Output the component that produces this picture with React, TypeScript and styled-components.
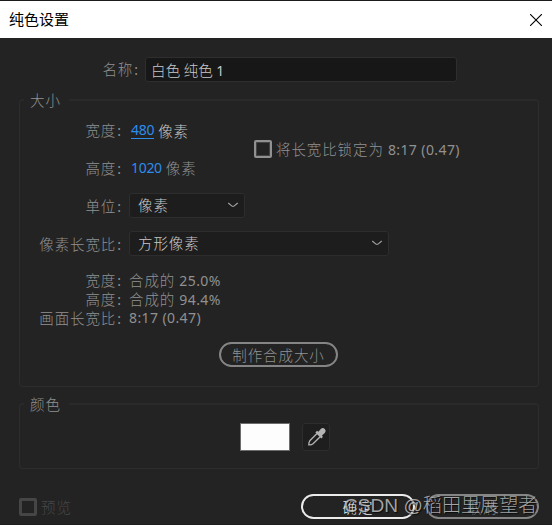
import React from "react";
import styled, { createGlobalStyle } from "styled-components";

const Global = createGlobalStyle`
  * { box-sizing: border-box; }
  body { margin: 0; background: #232323; overflow: hidden; }
`;

const cjk = `"Noto Sans CJK SC", sans-serif`;

const Dialog = styled.div`
  position: relative;
  width: 552px;
  height: 525px;
  background: #232323;
  border-top: 1px solid #1b1b1b;
  border-bottom: 1px solid #1d1d1d;
  color: #919191;
  font: 300 14.5px/19px ${cjk};
  letter-spacing: 0.9px;
  white-space: nowrap;
`;

const TitleBar = styled.header`
  display: flex;
  justify-content: space-between;
  align-items: center;
  height: 37px;
  padding: 0 10px 2px 9px;
  background: #fff;
  color: #000;
  font: 400 15px/20px ${cjk};
  letter-spacing: 0;
`;

const CloseIcon = styled.svg`
  margin-top: 2px;
`;

const NameRow = styled.div`
  display: flex;
  align-items: center;
  height: 25px;
  margin-top: 19px;
`;

const NameLabel = styled.label`
  width: 138px;
  margin-right: 7px;
  padding-bottom: 1px;
  text-align: right;
`;

const NameField = styled.div`
  width: 312px;
  height: 25px;
  padding: 2px 5px;
  border: 1px solid #2e2e2e;
  border-radius: 3px;
  background: #171717;
  color: #c8c8c8;
  letter-spacing: 0.15px;
  line-height: 19px;
`;

const Group = styled.section<{ $height: number; $gap: number }>`
  width: 520px;
  height: ${(p) => p.$height}px;
  margin: ${(p) => p.$gap}px 0 0 19px;
  border: 1px solid #2d2d2d;
  border-top: 2px solid #2a2a2a;
  border-radius: 4px;
`;

const Legend = styled.h2`
  width: 45px;
  height: 19px;
  margin: -11px 0 0 4px;
  padding-left: 6px;
  background: #232323;
  font: inherit;
`;

const Dimensions = styled.div`
  display: flex;
  align-items: center;
  height: 75px;
  margin-top: 2px;
`;

const DimensionFields = styled.div`
  width: 234px;
`;

const Row = styled.div<{ $height: number; $top?: number }>`
  display: flex;
  align-items: center;
  height: ${(p) => p.$height}px;
  margin-top: ${(p) => p.$top ?? 0}px;
`;

const Label = styled.span`
  width: 101px;
  margin-right: 8px;
  text-align: right;
`;

const Latin = styled.span`
  font-family: "Noto Sans", sans-serif;
  font-weight: 400;
  font-size: 14px;
  letter-spacing: 0.4px;
`;

const Colon = styled(Latin)`
  margin-left: 1px;
  letter-spacing: 0;
`;

const HotValue = styled(Latin)<{ $active?: boolean }>`
  height: 18px;
  line-height: 17px;
  margin: 0 4px 0 2px;
  letter-spacing: -0.3px;
  color: #2d8ceb;
  border-bottom: 1px solid ${(p) => (p.$active ? "#2d8ceb" : "transparent")};
`;

const Unit = styled.span<{ $active?: boolean }>`
  color: ${(p) => (p.$active ? "#c8c8c8" : "#919191")};
`;

const Check = styled.label<{ $disabled?: boolean }>`
  display: flex;
  align-items: center;
  gap: 4px;
  color: ${(p) => (p.$disabled ? "#464646" : "#919191")};
`;

const Box = styled.span`
  width: 18px;
  height: 18px;
  border: 2px solid currentColor;
  border-radius: 2px;
  box-shadow: inset 0 0 0 1px rgba(145, 145, 145, 0.3);
`;

const Select = styled.div<{ $width: number }>`
  display: flex;
  align-items: center;
  justify-content: space-between;
  width: ${(p) => p.$width}px;
  height: 25px;
  padding: 0 5px 2px 8px;
  border: 1px solid #2d2d2d;
  border-radius: 3px;
  background: #1d1d1d;
  color: #c8c8c8;
`;

const Summary = styled.div`
  margin-top: 14px;
`;

const Pill = styled.button<{ $width: number; $primary?: boolean }>`
  display: flex;
  align-items: center;
  justify-content: center;
  width: ${(p) => p.$width}px;
  height: 25px;
  padding: 0;
  border: 2px solid ${(p) => (p.$primary ? "#ebebeb" : "#858585")};
  border-radius: 13px;
  background: transparent;
  color: ${(p) => (p.$primary ? "#f0f0f0" : "#919191")};
  font: inherit;
  letter-spacing: 0.9px;
`;

const MakeCompSize = styled(Pill)`
  margin: 15px 0 0 199px;
`;

const ColorRow = styled.div`
  display: flex;
  gap: 12px;
  margin: 10px 0 0 220px;
`;

const Swatch = styled.div`
  width: 50px;
  height: 28px;
  border: 1px solid #6c6c6c;
  background: #fdfdfd;
`;

const Dropper = styled.div`
  display: grid;
  place-items: center;
  width: 28px;
  height: 28px;
  padding-left: 2px;
  border: 1px solid #2d2d2d;
  border-radius: 3px;
  background: #1e1e1e;
`;

const Footer = styled.footer`
  display: flex;
  align-items: center;
  height: 25px;
  margin: 25px 13px 0 19px;
`;

const Actions = styled.div`
  display: flex;
  gap: 11px;
  margin-left: auto;
`;

const Watermark = styled.div`
  position: absolute;
  left: 344px;
  top: 491px;
  color: rgba(190, 190, 190, 0.85);
  font: 300 19.1px/28px "Liberation Sans", ${cjk};
  letter-spacing: 0;
  text-shadow: 1px 1px 1px rgba(0, 0, 0, 0.7);
`;

const Chevron = () => (
  <svg width="12" height="8" viewBox="0 0 12 8" fill="none" stroke="#a8a8a8" strokeWidth="1.1">
    <path d="M1.3 2 L5.2 5.3 H6.8 L10.7 2" />
  </svg>
);

export default function App() {
  return (
    <>
      <Global />
      <Dialog>
        <TitleBar>
          <span>纯色设置</span>
          <CloseIcon width="12" height="12" viewBox="0 0 12 12" stroke="#000" strokeWidth="1.1">
            <path d="M0 0 L12 12 M12 0 L0 12" />
          </CloseIcon>
        </TitleBar>

        <NameRow>
          <NameLabel>名称<Colon>:</Colon></NameLabel>
          <NameField>白色 纯色 <Latin>1</Latin></NameField>
        </NameRow>

        <Group $height={288} $gap={17}>
          <Legend>大小</Legend>
          <Dimensions>
            <DimensionFields>
              <Row $height={38}>
                <Label>宽度<Colon>:</Colon></Label>
                <HotValue $active>480</HotValue>
                <Unit $active>像素</Unit>
              </Row>
              <Row $height={37}>
                <Label>高度<Colon>:</Colon></Label>
                <HotValue>1020</HotValue>
                <Unit>像素</Unit>
              </Row>
            </DimensionFields>
            <Check>
              <Box />
              <span>将长宽比锁定为 <Latin>8:17 (0.47)</Latin></span>
            </Check>
          </Dimensions>
          <Row $height={25} $top={7}>
            <Label>单位<Colon>:</Colon></Label>
            <Select $width={116}>像素<Chevron /></Select>
          </Row>
          <Row $height={25} $top={13}>
            <Label>像素长宽比<Colon>:</Colon></Label>
            <Select $width={260}>方形像素<Chevron /></Select>
          </Row>
          <Summary>
            <Row $height={19}>
              <Label>宽度<Colon>:</Colon></Label>
              <span>合成的 <Latin>25.0%</Latin></span>
            </Row>
            <Row $height={19}>
              <Label>高度<Colon>:</Colon></Label>
              <span>合成的 <Latin>94.4%</Latin></span>
            </Row>
            <Row $height={19}>
              <Label>画面长宽比<Colon>:</Colon></Label>
              <Latin>8:17 (0.47)</Latin>
            </Row>
          </Summary>
          <MakeCompSize $width={119}>制作合成大小</MakeCompSize>
        </Group>

        <Group $height={66} $gap={16}>
          <Legend>颜色</Legend>
          <ColorRow>
            <Swatch />
            <Dropper>
              <svg width="20" height="20" viewBox="0 0 20 20">
                <path
                  d="M10 6.5 L2.8 13.8 Q1.8 15 1.8 17.8 Q4.6 18 6 16.8 L13.2 9.7"
                  fill="none"
                  stroke="#b4b4b4"
                  strokeWidth="1.3"
                />
                <path
                  d="M8.4 5.4 L10 3.8 L11.4 4.8 L14 1.8 Q15.8 0.2 17.8 2 Q19.6 3.9 18 5.7 L15 8.4 L15.9 9.9 L14.3 11.4 Z"
                  fill="#b4b4b4"
                />
              </svg>
            </Dropper>
          </ColorRow>
        </Group>

        <Footer>
          <Check $disabled>
            <Box />
            <span>预览</span>
          </Check>
          <Actions>
            <Pill $width={114} $primary>确定</Pill>
            <Pill $width={113}>取消</Pill>
          </Actions>
        </Footer>
        <Watermark>CSDN @稻田里展望者</Watermark>
      </Dialog>
    </>
  );
}
